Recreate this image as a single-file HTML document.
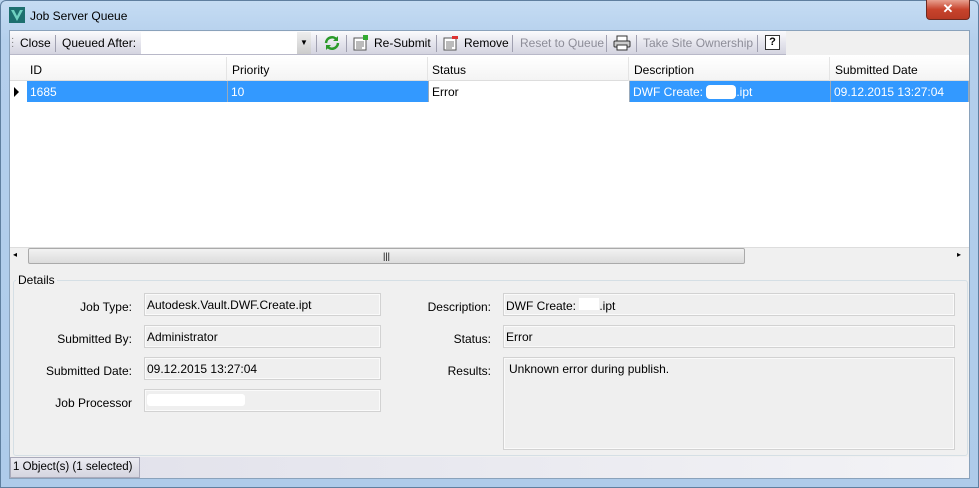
<!DOCTYPE html>
<html><head><style>
*{margin:0;padding:0;box-sizing:border-box}
body{width:979px;height:488px;overflow:hidden;font-family:"Liberation Sans",sans-serif;font-size:12px;color:#000;background:#b9d3ee;position:relative}
.a{position:absolute;white-space:nowrap}
.frame{left:0;top:0;width:979px;height:488px;background:linear-gradient(#c5dcf3,#b4cfec 40px,#aecbea);border:1px solid #5f7f9f;border-radius:6px 6px 0 0}
.inner{left:9px;top:30px;width:961px;height:449px;background:#f0f0f0;border:1px solid #8aa2bb}
.tb{left:10px;top:31px;width:776px;height:24px;background:linear-gradient(#fbfbfd,#e6e6ee 50%,#d4d4e0);border-bottom:1px solid #b8b8c8}
.tb span{position:absolute;top:5px}
.sep{position:absolute;top:4px;width:1px;height:17px;background:#a0a0b0}
.hdr{top:56px;height:25px;background:linear-gradient(#fff,#f4f4f4);border-bottom:1px solid #ddd}
.hdr span{position:absolute;top:7px}
.cell{position:absolute;top:81px;height:21px;padding:4px 3px;color:#fff;background:#3399ff;border-right:1px solid #9ab;white-space:nowrap}
.box{position:absolute;background:#efefef;border:1px solid #d2d2d2;box-shadow:inset 0 0 0 1px #fafafa;padding:4px 2px;white-space:nowrap}
.lbl{position:absolute;text-align:right}
</style></head><body>
<div class="a frame"></div>
<svg class="a" style="left:9px;top:7px" width="16" height="16"><rect width="16" height="16" fill="#1d6f6f"/><path d="M2 3 L8 14 L14 3 L11 3 L8 9 L5 3Z" fill="#6fd0c0"/></svg>
<div class="a" style="left:30px;top:9px;font-size:12px">Job Server Queue</div>
<div class="a" style="left:926px;top:0;width:44px;height:20px;background:linear-gradient(#e8a08f,#c7432c 50%,#b83a24);border:1px solid #6d2a20;border-top:none;border-radius:0 0 4px 4px;color:#fff;text-align:center;font-weight:bold;font-size:13px;line-height:18px">✕</div>
<div class="a inner"></div>
<div class="a tb">
<span style="left:1px;top:6px;color:#777;font-size:10px;line-height:4px">·<br>·<br>·</span>
<span style="left:10px">Close</span><div class="sep" style="left:45px"></div>
<span style="left:52px">Queued After:</span>
<div style="position:absolute;left:131px;top:1px;width:167px;height:22px;background:#fff"></div>
<div style="position:absolute;left:287px;top:1px;width:14px;height:22px;background:linear-gradient(#eee,#ccc);font-size:8px;text-align:center;line-height:22px">▼</div>
<div class="sep" style="left:306px"></div>
<svg style="position:absolute;left:313px;top:3px" width="18" height="18"><path d="M3 9a6 6 0 0 1 11-3" stroke="#2a9a2a" stroke-width="2.5" fill="none"/><path d="M15 9a6 6 0 0 1-11 3" stroke="#2a9a2a" stroke-width="2.5" fill="none"/><path d="M15 2v5h-5z M3 16v-5h5z" fill="#2a9a2a"/></svg>
<div class="sep" style="left:336px"></div>
<svg style="position:absolute;left:343px;top:4px" width="16" height="16"><rect x="1" y="3" width="12" height="12" fill="#fff" stroke="#555"/><path d="M3 7h8M3 9h8M3 11h8M3 13h6" stroke="#777"/><rect x="10" y="0" width="5" height="5" fill="#3a3"/></svg>
<span style="left:364px">Re-Submit</span><div class="sep" style="left:426px"></div>
<svg style="position:absolute;left:433px;top:4px" width="16" height="16"><rect x="1" y="3" width="12" height="12" fill="#fff" stroke="#555"/><path d="M3 7h8M3 9h8M3 11h8M3 13h6" stroke="#777"/><rect x="9" y="1" width="6" height="3" fill="#d33"/></svg>
<span style="left:454px">Remove</span><div class="sep" style="left:502px"></div>
<span style="left:510px;color:#8d8d98">Reset to Queue</span><div class="sep" style="left:596px"></div>
<svg style="position:absolute;left:603px;top:4px" width="18" height="16"><rect x="4" y="1" width="10" height="5" fill="#fff" stroke="#333"/><rect x="1" y="6" width="16" height="6" rx="1" fill="#ccc" stroke="#333"/><rect x="4" y="10" width="10" height="5" fill="#fff" stroke="#333"/></svg>
<div class="sep" style="left:626px"></div>
<span style="left:633px;color:#8d8d98">Take Site Ownership</span><div class="sep" style="left:747px"></div>
<div style="position:absolute;left:755px;top:4px;width:15px;height:15px;border:1px solid #333;background:#fff;font-weight:bold;font-size:11px;text-align:center;line-height:13px">?</div>
</div>
<div class="a" style="left:10px;top:55px;width:959px;height:192px;background:#fff"></div>
<div class="a hdr" style="left:10px;width:959px"></div>
<div class="a hdr" style="left:27px;width:942px">
<span style="left:3px">ID</span><span style="left:205px">Priority</span><span style="left:405px">Status</span><span style="left:607px">Description</span><span style="left:808px">Submitted Date</span></div>
<div class="a" style="left:226px;top:57px;width:1px;height:24px;background:#e4e4e4"></div>
<div class="a" style="left:427px;top:57px;width:1px;height:24px;background:#e4e4e4"></div>
<div class="a" style="left:628px;top:57px;width:1px;height:24px;background:#e4e4e4"></div>
<div class="a" style="left:829px;top:57px;width:1px;height:24px;background:#e4e4e4"></div>
<div class="a" style="left:14px;top:87px;width:0;height:0;border-left:5px solid #000;border-top:5px solid transparent;border-bottom:5px solid transparent"></div>
<div class="cell" style="left:27px;width:201px">1685</div>
<div class="cell" style="left:228px;width:201px">10</div>
<div class="cell" style="left:429px;width:201px;background:#fff;color:#000">Error</div>
<div class="cell" style="left:630px;width:201px">DWF Create: <span style="background:#fff;color:#fff;border-radius:4px">xxxxx</span>.ipt</div>
<div class="cell" style="left:831px;width:138px">09.12.2015 13:27:04</div>
<div class="a" style="left:10px;top:247px;width:959px;height:18px;background:#f0f0f0;border-top:1px solid #ddd"></div>
<div class="a" style="left:28px;top:248px;width:717px;height:16px;background:linear-gradient(#f2f2f2,#dcdcdc);border:1px solid #aaa;border-radius:2px;text-align:center;font-size:9px;line-height:14px">|||</div>
<div class="a" style="left:13px;top:250px;font-size:8px">◂</div>
<div class="a" style="left:957px;top:250px;font-size:8px">▸</div>
<div class="a" style="left:13px;top:280px;width:955px;height:176px;border:1px solid #d5dfe5;border-radius:3px"></div>
<div class="a" style="left:16px;top:273px;background:#f0f0f0;padding:0 2px">Details</div>
<div class="lbl" style="left:20px;width:112px;top:300px">Job Type:</div>
<div class="lbl" style="left:20px;width:112px;top:332px">Submitted By:</div>
<div class="lbl" style="left:20px;width:112px;top:364px">Submitted Date:</div>
<div class="lbl" style="left:20px;width:112px;top:396px">Job Processor</div>
<div class="box" style="left:144px;top:293px;width:237px;height:23px">Autodesk.Vault.DWF.Create.ipt</div>
<div class="box" style="left:144px;top:325px;width:237px;height:23px">Administrator</div>
<div class="box" style="left:144px;top:357px;width:237px;height:23px">09.12.2015 13:27:04</div>
<div class="box" style="left:144px;top:389px;width:237px;height:23px"><span style="display:inline-block;width:98px;height:12px;background:#fff;border-radius:3px"></span></div>
<div class="lbl" style="left:390px;width:101px;top:300px">Description:</div>
<div class="lbl" style="left:390px;width:101px;top:332px">Status:</div>
<div class="lbl" style="left:390px;width:101px;top:364px">Results:</div>
<div class="box" style="left:503px;top:293px;width:452px;height:23px">DWF Create: <span style="display:inline-block;width:20px;height:12px;background:#fff"></span>.ipt</div>
<div class="box" style="left:503px;top:325px;width:452px;height:23px">Error</div>
<div class="box" style="left:503px;top:357px;width:452px;height:93px;padding:4px 5px">Unknown error during publish.</div>
<div class="a" style="left:10px;top:457px;width:959px;height:21px;background:linear-gradient(90deg,#e0e0ea,#f3f3f6)"></div>
<div class="a" style="left:10px;top:457px;width:130px;height:21px;background:linear-gradient(#ececf3,#d5d5e0);border:1px solid #aab;padding:3px 2px;font-size:11.5px;overflow:hidden">1 Object(s) (1 selected)</div>
</body></html>
